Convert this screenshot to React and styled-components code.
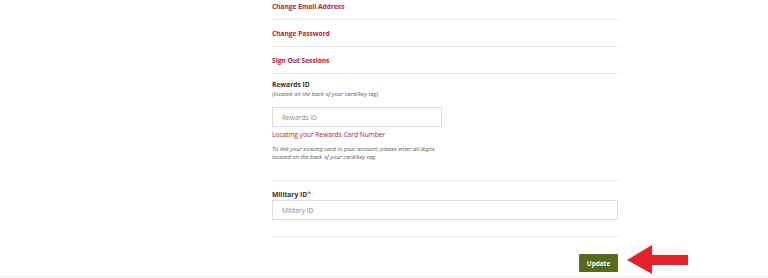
import styled, { createGlobalStyle } from "styled-components";

const GlobalStyle = createGlobalStyle`
  html, body {
    margin: 0;
    padding: 0;
    background: #ffffff;
    font-family: "Open Sans", "Liberation Sans", sans-serif;
  }
`;

const Page = styled.div`
  position: relative;
  width: 768px;
  height: 278px;
  overflow: hidden;
  background: #ffffff;
`;

const Form = styled.div`
  width: 346px;
  margin-left: 272px;
  margin-top: -7px;
  display: flex;
  flex-direction: column;
`;

const LinkRow = styled.a`
  height: 26px;
  display: flex;
  align-items: center;
  border-bottom: 1px solid #e6e6e6;
  color: #b9232b;
  font-size: 6.6px;
  font-weight: 700;
  text-decoration: none;
  cursor: pointer;
`;

const Section = styled.div`
  display: flex;
  flex-direction: column;
  border-bottom: 1px solid #e6e6e6;
  padding: ${(p) => p.$pad};
`;

const Label = styled.label`
  font-size: 6.7px;
  font-weight: 700;
  color: #333333;
  line-height: 10px;
`;

const Required = styled.span`
  color: #c0272d;
  font-weight: 400;
`;

const Note = styled.div`
  font-size: 5.8px;
  font-style: italic;
  color: #555555;
  line-height: 8px;
  margin-top: ${(p) => p.$mt || "0px"};
`;

const Input = styled.input`
  box-sizing: border-box;
  width: ${(p) => p.$width || "100%"};
  height: 20px;
  margin-top: ${(p) => p.$mt || "0px"};
  padding: 0 9px;
  border: 1px solid #dddddd;
  border-radius: 0;
  font-family: inherit;
  font-size: 6.6px;
  color: #333333;
  outline: none;
  &::placeholder {
    color: #8a8a8a;
  }
`;

const RedLink = styled.a`
  color: #b9232b;
  font-size: 6.6px;
  line-height: 10px;
  margin-top: 3px;
  cursor: pointer;
`;

const Actions = styled.div`
  display: flex;
  justify-content: flex-end;
  padding-top: 17px;
`;

const Button = styled.button`
  width: 39px;
  height: 18px;
  border: none;
  border-radius: 1px;
  background: #566b1c;
  color: #ffffff;
  font-family: inherit;
  font-size: 6.4px;
  font-weight: 700;
  cursor: pointer;
  padding: 0;
`;

const BottomRule = styled.div`
  position: absolute;
  left: 0;
  right: 0;
  top: 276px;
  height: 1px;
  background: #ececec;
`;

const Arrow = styled.svg`
  position: absolute;
  left: 626px;
  top: 244px;
`;

export default function App() {
  return (
    <Page>
      <GlobalStyle />
      <Form>
        <LinkRow>Change Email Address</LinkRow>
        <LinkRow>Change Password</LinkRow>
        <LinkRow>Sign Out Sessions</LinkRow>
        <Section $pad="6px 0 19px">
          <Label>Rewards ID</Label>
          <Note>(located on the back of your card/key tag)</Note>
          <Input placeholder="Rewards ID" $width="170px" $mt="9px" />
          <RedLink>Locating your Rewards Card Number</RedLink>
          <Note $mt="5px">
            To link your existing card to your account, please enter all digits
            <br />
            located on the back of your card/key tag.
          </Note>
        </Section>
        <Section $pad="9px 0 16px">
          <Label>
            Military ID<Required>*</Required>
          </Label>
          <Input placeholder="Military ID" />
        </Section>
        <Actions>
          <Button>Update</Button>
        </Actions>
      </Form>
      <BottomRule />
      <Arrow width="64" height="31" viewBox="0 0 64 31">
        <polygon
          points="1,16 26,1 26,11 62,11 62,21 26,21 26,30"
          fill="#e5202a"
        />
      </Arrow>
    </Page>
  );
}
